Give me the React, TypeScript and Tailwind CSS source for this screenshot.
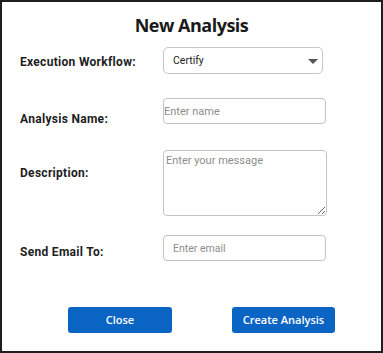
import React from 'react';

const labelCls =
  "w-[143px] shrink-0 text-[12px] font-bold tracking-[0.3px] text-[#1e1e1e] leading-4 [font-family:Roboto,'Liberation_Sans',sans-serif]";
const inputCls =
  "block w-[163px] h-[26px] rounded-[4px] border border-[#c4c4c4] bg-white text-[#333] outline-none placeholder:text-[#8e8e8e] [font-family:Roboto,'Liberation_Sans',sans-serif]";
const buttonCls =
  "h-[26px] rounded-[3px] bg-[#0a64c4] text-white text-[11px] font-semibold [font-family:'Open_Sans','Noto_Sans',sans-serif]";

const App: React.FC = () => {
  return (
    <div className="w-[383px] h-[353px] border-2 border-[#1f1f1f] bg-white flex flex-col">
      <h1 className="mt-[11px] text-center text-[18px] font-bold leading-6 tracking-[-0.5px] text-[#1a1a1a] [font-family:'Open_Sans','Noto_Sans',sans-serif]">
        New Analysis
      </h1>

      <div className="mt-[10px] pl-[18px] flex flex-col">
        <div className="h-[27px] flex items-start">
          <label className={`${labelCls} mt-[7px]`}>Execution Workflow:</label>
          <div className="relative w-[160px] h-[27px] rounded-[5px] border-[1.5px] border-[#c6c6c6] bg-white flex items-center pl-[9px] text-[10.5px] text-[#222] [font-family:Roboto,'Liberation_Sans',sans-serif]">
            Certify
            <svg className="absolute right-[4px] top-[11px]" width="10" height="5" viewBox="0 0 10 5">
              <path d="M0 0 L10 0 L5 5 Z" fill="#555" />
            </svg>
          </div>
        </div>

        <div className="mt-[24px] h-[26px] flex items-start">
          <label className={`${labelCls} mt-[13px]`}>Analysis Name:</label>
          <input className={`${inputCls} px-0 text-[11px]`} placeholder="Enter name" />
        </div>

        <div className="mt-[26px] h-[66px] flex items-start">
          <label className={`${labelCls} mt-[15px]`}>Description:</label>
          <textarea
            className={`${inputCls} h-[66px] w-[164px] px-[2px] pt-[2px] leading-4 text-[11px]`}
            placeholder="Enter your message"
          />
        </div>

        <div className="mt-[19px] h-[26px] flex items-start">
          <label className={`${labelCls} mt-[9px]`}>Send Email To:</label>
          <input className={`${inputCls} px-[9px] text-[10.5px]`} placeholder="Enter email" />
        </div>
      </div>

      <div className="mt-[46px] pl-[66px] flex gap-[60px]">
        <button className={`${buttonCls} w-[104px]`}>Close</button>
        <button className={`${buttonCls} w-[103px]`}>Create Analysis</button>
      </div>
    </div>
  );
};

export default App;
